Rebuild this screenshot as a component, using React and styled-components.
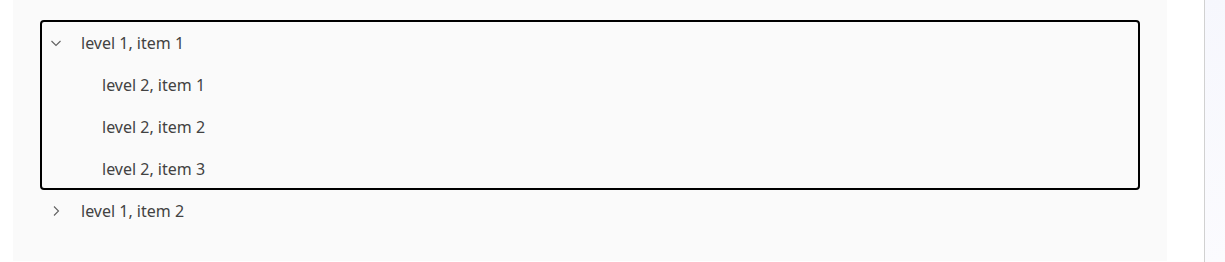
import React, { useState } from 'react';
import styled, { createGlobalStyle } from 'styled-components';

const GlobalStyle = createGlobalStyle`
  html, body {
    margin: 0;
    padding: 0;
    background: #ffffff;
  }
  body {
    font-family: "Noto Sans", "Open Sans", sans-serif;
  }
`;

const Page = styled.div`
  display: flex;
  height: 262px;
  width: 1225px;
  overflow: hidden;
`;

const Panel = styled.div`
  margin-left: 13px;
  width: 1154px;
  height: 261px;
  background: #fafafa;
  padding: 20px 0 0 27px;
  box-sizing: border-box;
`;

const Gutter = styled.div`
  width: 37px;
  background: #ffffff;
`;

const Sidebar = styled.div`
  flex: 1;
  border-left: 1px solid #d1d1d1;
  background: linear-gradient(160deg, #f6f7fd 0%, #fbfbfe 100%);
`;

const TreeList = styled.div`
  width: 1100px;
  display: flex;
  flex-direction: column;
`;

const Branch = styled.div`
  position: relative;
  padding-top: ${({ focused }) => (focused ? 2 : 0)}px;
  &::after {
    content: '';
    display: ${({ focused }) => (focused ? 'block' : 'none')};
    position: absolute;
    inset: 0;
    border: 2px solid #000000;
    border-radius: 4px;
    pointer-events: none;
  }
`;

const Row = styled.div`
  display: flex;
  align-items: center;
  height: 42px;
  padding-left: ${({ level }) => (level === 1 ? 10 : 62)}px;
  font-size: 16px;
  color: #424242;
  cursor: pointer;
  user-select: none;
`;

const Chevron = styled.span`
  display: inline-flex;
  align-items: center;
  justify-content: center;
  width: 12px;
  height: 12px;
  margin-right: 19px;
  color: #616161;
`;

const ChevronIcon = ({ open }) => (
  <svg width="12" height="12" viewBox="0 0 12 12" fill="none">
    {open ? (
      <path d="M1.5 4 L6 8.5 L10.5 4" stroke="currentColor" strokeWidth="1.1" />
    ) : (
      <path d="M4 1.5 L8.5 6 L4 10.5" stroke="currentColor" strokeWidth="1.1" />
    )}
  </svg>
);

const tree = [
  { label: 'level 1, item 1', children: ['level 2, item 1', 'level 2, item 2', 'level 2, item 3'] },
  { label: 'level 1, item 2', children: ['level 2, item 1', 'level 2, item 2'] },
];

const App = () => {
  const [open, setOpen] = useState({ 0: true });
  return (
    <>
      <GlobalStyle />
      <Page>
        <Panel>
          <TreeList>
            {tree.map((item, i) => (
              <Branch key={item.label} focused={i === 0}>
                <Row level={1} onClick={() => setOpen({ ...open, [i]: !open[i] })}>
                  <Chevron>
                    <ChevronIcon open={open[i]} />
                  </Chevron>
                  {item.label}
                </Row>
                {open[i] && item.children.map((child) => (
                  <Row key={child} level={2}>{child}</Row>
                ))}
              </Branch>
            ))}
          </TreeList>
        </Panel>
        <Gutter />
        <Sidebar />
      </Page>
    </>
  );
};

export default App;
